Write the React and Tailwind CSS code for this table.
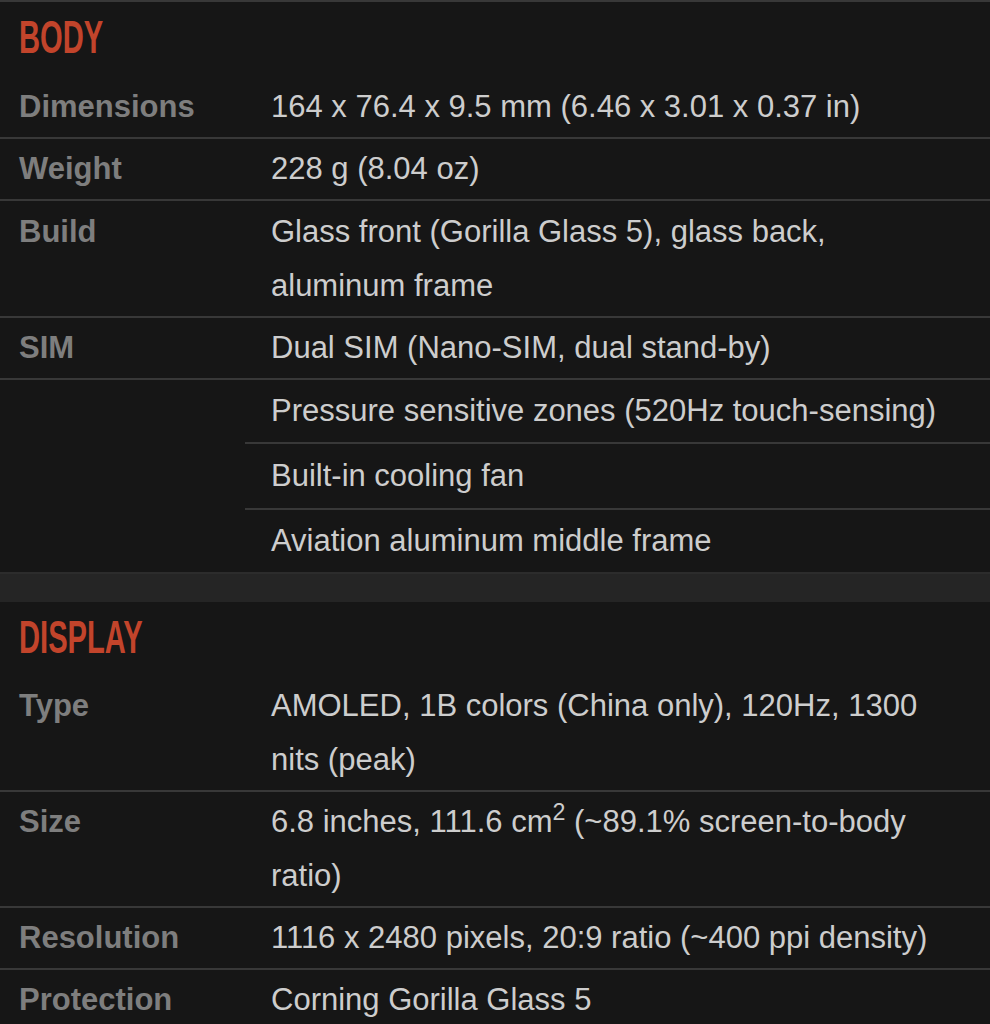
import React from "react";

const sections = [
  {
    title: "BODY",
    rows: [
      { label: "Dimensions", value: "164 x 76.4 x 9.5 mm (6.46 x 3.01 x 0.37 in)" },
      { label: "Weight", value: "228 g (8.04 oz)" },
      { label: "Build", value: "Glass front (Gorilla Glass 5), glass back, aluminum frame", tall: true },
      { label: "SIM", value: "Dual SIM (Nano-SIM, dual stand-by)" },
      {
        label: "",
        sub: [
          "Pressure sensitive zones (520Hz touch-sensing)",
          "Built-in cooling fan",
          "Aviation aluminum middle frame",
        ],
      },
    ],
  },
  {
    title: "DISPLAY",
    rows: [
      { label: "Type", value: "AMOLED, 1B colors (China only), 120Hz, 1300 nits (peak)" },
      {
        label: "Size",
        value: (
          <>
            6.8 inches, 111.6 cm<sup>2</sup> (~89.1% screen-to-body ratio)
          </>
        ),
      },
      { label: "Resolution", value: "1116 x 2480 pixels, 20:9 ratio (~400 ppi density)" },
      { label: "Protection", value: "Corning Gorilla Glass 5" },
    ],
  },
];

const Row = ({ row, last }) => {
  if (row.sub) {
    return (
      <div className="grid grid-cols-[245px_1fr]">
        <div />
        <div>
          {row.sub.map((s, i) => (
            <div
              key={i}
              className={
                "pl-[26px] pr-[40px] leading-[54px] text-[#cdcdcd] " +
                (i === 1 ? "py-[5px] " : "py-[4px] ") +
                (i < row.sub.length - 1 ? "border-b-2 border-[#383838]" : "")
              }
            >
              {s}
            </div>
          ))}
        </div>
      </div>
    );
  }
  return (
    <div
      className={
        "grid grid-cols-[245px_1fr] leading-[54px] " +
        (row.tall ? "pt-[4px] pb-[3px] " : "pt-[3px] pb-[3px] ") +
        (last ? "" : "border-b-2 border-[#383838]")
      }
    >
      <div className="pl-[19px] font-bold text-[#7e7e7e]">{row.label}</div>
      <div className="pl-[26px] pr-[40px] text-[#cdcdcd]">{row.value}</div>
    </div>
  );
};

const Section = ({ section }) => (
  <div>
    <div className="pl-[19px] pt-[11px] pb-[10px]">
      <h2
        className="inline-block origin-left scale-x-[0.62] text-[47px] font-bold leading-[47px] text-[#c2442b]"
        style={{ fontFamily: '"Liberation Sans", Arial, sans-serif' }}
      >
        {section.title}
      </h2>
    </div>
    {section.rows.map((row, i) => (
      <Row key={i} row={row} last={i === section.rows.length - 1 && !row.sub} />
    ))}
  </div>
);

export default function App() {
  return (
    <div
      className="min-h-screen w-[990px] overflow-hidden border-t-2 border-[#383838] bg-[#161616] text-[31px]"
      style={{ fontFamily: '"Liberation Sans", Arial, sans-serif' }}
    >
      <Section section={sections[0]} />
      <div className="h-[30px] border-t-2 border-[#2c2c2c] bg-[#252525]" />
      <Section section={sections[1]} />
    </div>
  );
}
